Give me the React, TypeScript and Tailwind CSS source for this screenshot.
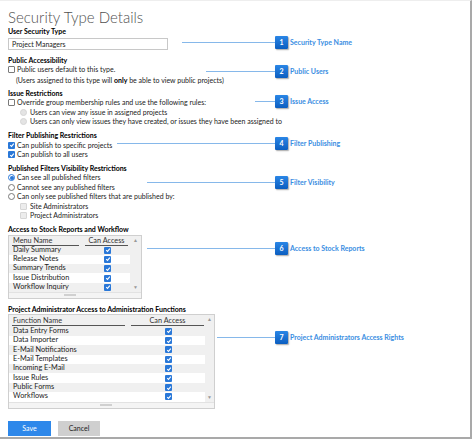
import React from "react";

type Callout = { n: number; label: string; y: number; from: number };

const callouts: Callout[] = [
  { n: 1, label: "Security Type Name", y: 42, from: 182 },
  { n: 2, label: "Public Users", y: 71, from: 206 },
  { n: 3, label: "Issue Access", y: 101, from: 255 },
  { n: 4, label: "Filter Publishing", y: 143, from: 117 },
  { n: 5, label: "Filter Visibility", y: 182, from: 147 },
  { n: 6, label: "Access to Stock Reports", y: 248, from: 147 },
  { n: 7, label: "Project Administrators Access Rights", y: 337, from: 217 },
];

const stockReports = [
  "Daily Summary",
  "Release Notes",
  "Summary Trends",
  "Issue Distribution",
  "Workflow Inquiry",
];

const adminFunctions = [
  "Data Entry Forms",
  "Data Importer",
  "E-Mail Notifications",
  "E-Mail Templates",
  "Incoming E-Mail",
  "Issue Rules",
  "Public Forms",
  "Workflows",
];

const Check = ({ checked, disabled }: { checked?: boolean; disabled?: boolean }) => {
  if (checked) {
    return (
      <span className="flex h-[7px] w-[7px] shrink-0 items-center justify-center rounded-[1px] bg-[#2a78d8]">
        <svg viewBox="0 0 10 10" className="h-[6px] w-[6px]">
          <path d="M2 5.2 L4.2 7.3 L8 2.8" fill="none" stroke="white" strokeWidth="1.8" />
        </svg>
      </span>
    );
  }
  return (
    <span
      className={
        disabled
          ? "h-[7px] w-[7px] shrink-0 rounded-[1px] border border-[#d6d6d6] bg-[#ececec]"
          : "h-[7px] w-[7px] shrink-0 rounded-[1px] border border-[#7a7a7a] bg-white"
      }
    />
  );
};

const Radio = ({ checked, disabled }: { checked?: boolean; disabled?: boolean }) => {
  if (checked) {
    return (
      <span className="flex h-[7px] w-[7px] shrink-0 items-center justify-center rounded-full border border-[#2a78d8] bg-white">
        <span className="h-[4px] w-[4px] rounded-full bg-[#2a78d8]" />
      </span>
    );
  }
  return (
    <span
      className={
        disabled
          ? "h-[7px] w-[7px] shrink-0 rounded-full border border-[#d6d6d6] bg-[#e4e4e4]"
          : "h-[7px] w-[7px] shrink-0 rounded-full border border-[#7a7a7a] bg-white"
      }
    />
  );
};

const Heading = ({ children, className = "" }: { children: React.ReactNode; className?: string }) => (
  <div className={"h-[9.5px] leading-[9.5px] font-bold text-black " + className}>{children}</div>
);

const Line = ({ children, className = "" }: { children: React.ReactNode; className?: string }) => (
  <div className={"flex h-[9.5px] items-center gap-[2px] leading-[9.5px] text-[#222] " + className}>
    {children}
  </div>
);

const AccessTable = ({
  first,
  rows,
  nameW,
  accessW,
  rowH,
  headerH,
}: {
  first: string;
  rows: string[];
  nameW: number;
  accessW: number;
  rowH: number;
  headerH: number;
}) => (
  <div className="flex flex-col border border-[#cfcfcf] bg-[#f0f0f0] text-[7.3px]">
    <div className="flex">
      <div className="flex-1">
        <div className="flex items-end pl-[3px]" style={{ height: headerH }}>
          <div className="border-b border-[#555] pl-[1px] leading-[8px] text-[#333]" style={{ width: nameW }}>
            {first}
          </div>
          <div
            className="ml-[6px] border-b border-[#555] text-center leading-[8px] text-[#333]"
            style={{ width: accessW }}
          >
            Can Access
          </div>
        </div>
        {rows.map((r, i) => (
          <div
            key={r}
            className={"flex items-center pl-[4px] text-[#222] " + (i % 2 === 1 ? "bg-white" : "")}
            style={{ height: rowH }}
          >
            <div style={{ width: nameW }}>{r}</div>
            <div className="ml-[6px] flex justify-center" style={{ width: accessW }}>
              <Check checked />
            </div>
          </div>
        ))}
      </div>
      <div className="flex w-[11px] flex-col items-center justify-between py-[2px] text-[5px] leading-[5px] text-[#999]">
        <span>▲</span>
        <span>▼</span>
      </div>
    </div>
    <div className="flex h-[6px] items-center justify-center border-t border-[#e2e2e2] bg-[#f4f4f4] pr-[11px]">
      <span className="h-[2px] w-[12px] bg-[#d0d0d0]" />
    </div>
  </div>
);

export default function App() {
  return (
    <div
      className="relative h-[439px] w-[472px] border-t border-r-2 border-b-2 border-t-[#eeeeee] border-r-[#a9a9a9] border-b-[#a9a9a9] bg-white text-[7px]"
      style={{ fontFamily: 'Lato, "Noto Sans", sans-serif' }}
    >
      <div className="pl-[8px] pt-[7px]">
        <h1 className="h-[19px] text-[15px] leading-[19px] font-light text-[#505050]">Security Type Details</h1>
        <Heading>User Security Type</Heading>
        <div className="mt-[1.5px] flex h-[12px] w-[160px] items-center border border-[#c8c8c8] bg-white pl-[3px] text-[#222]">
          Project Managers
        </div>

        <Heading className="mt-[5.5px]">Public Accessibility</Heading>
        <Line>
          <Check />
          Public users default to this type.
        </Line>
        <Line className="mt-[1.5px] pl-[8px]">
          <span>
            (Users assigned to this type will <b className="text-black">only</b> be able to view public projects)
          </span>
        </Line>

        <Heading className="mt-[3px]">Issue Restrictions</Heading>
        <Line>
          <Check />
          Override group membership rules and use the following rules:
        </Line>
        <Line className="pl-[12px]">
          <Radio disabled />
          <span className="pl-[1px]">Users can view any issue in assigned projects</span>
        </Line>
        <Line className="pl-[12px]">
          <Radio disabled />
          <span className="pl-[1px]">Users can only view issues they have created, or issues they have been assigned to</span>
        </Line>

        <Heading className="mt-[4.5px]">Filter Publishing Restrictions</Heading>
        <Line>
          <Check checked />
          Can publish to specific projects
        </Line>
        <Line>
          <Check checked />
          Can publish to all users
        </Line>

        <Heading className="mt-[4px]">Published Filters Visibility Restrictions</Heading>
        <Line>
          <Radio checked />
          Can see all published filters
        </Line>
        <Line>
          <Radio />
          Cannot see any published filters
        </Line>
        <Line>
          <Radio />
          Can only see published filters that are published by:
        </Line>
        <Line className="pl-[12px]">
          <Check disabled />
          <span className="pl-[1px]">Site Administrators</span>
        </Line>
        <Line className="pl-[12px]">
          <Check disabled />
          <span className="pl-[1px]">Project Administrators</span>
        </Line>

        <Heading className="mt-[4px]">Access to Stock Reports and Workflow</Heading>
        <div className="mt-[0.5px] w-[134px]">
          <AccessTable first="Menu Name" rows={stockReports} nameW={67} accessW={43} rowH={9.3} headerH={10} />
        </div>

        <Heading className="mt-[6px]">Project Administrator Access to Administration Functions</Heading>
        <div className="w-[207px]">
          <AccessTable first="Function Name" rows={adminFunctions} nameW={113} accessW={73} rowH={9.4} headerH={11} />
        </div>

        <div className="mt-[12px] flex gap-[7px]">
          <button className="h-[15px] w-[43px] bg-[#2e88ea] text-[7px] text-white">Save</button>
          <button className="h-[15px] w-[42px] bg-[#cfcfcf] text-[7px] text-[#222]">Cancel</button>
        </div>
      </div>

      {callouts.map((c) => (
        <div key={c.n} className="absolute left-0 flex items-center" style={{ top: c.y - 7 }}>
          <div className="h-[1px] bg-[#86b8ea]" style={{ marginLeft: c.from, width: 275 - c.from }} />
          <div className="flex h-[13px] w-[13px] items-center justify-center rounded-[1px] bg-gradient-to-b from-[#2a86e6] to-[#0b5ec0] text-[7px] font-bold text-white shadow-[1px_1px_1.5px_rgba(0,0,0,0.35)]">
            {c.n}
          </div>
          <span className="ml-[2px] text-[7px] font-bold text-[#3a8ee2]">{c.label}</span>
        </div>
      ))}
    </div>
  );
}
